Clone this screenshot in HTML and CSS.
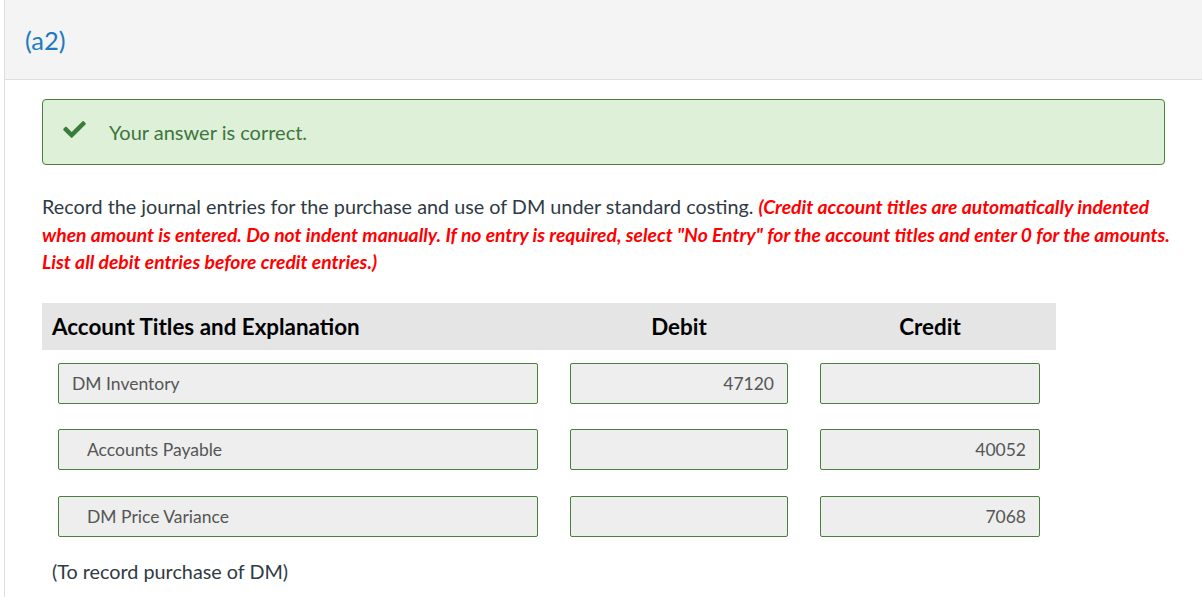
FILE: index.html
```html
<!DOCTYPE html>
<html lang="en">
<head>
    <meta charset="UTF-8">
    <title>(a2) Journal Entries</title>
    <link rel="stylesheet" href="styles.css">
</head>
<body>
    <div class="part">
        <div class="part-header">
            <span class="part-label">(a2)</span>
        </div>
        <div class="part-body">
            <div class="feedback-correct">
                <svg class="check-icon" viewBox="0 64 512 384" width="23" height="17" aria-hidden="true">
                    <path d="M173.9 439.4l-166.4-166.4c-10-10-10-26.2 0-36.2l36.2-36.2c10-10 26.2-10 36.2 0L192 312.7 432.1 72.6c10-10 26.2-10 36.2 0l36.2 36.2c10 10 10 26.2 0 36.2l-294.4 294.4c-10 10-26.2 10-36.2 0z"/>
                </svg>
                <span>Your answer is correct.</span>
            </div>

            <p class="question-text">
                Record the journal entries for the purchase and use of DM under standard costing.
                <em class="instructions">(Credit account titles are automatically indented when amount is entered. Do not indent manually. If no entry is required, select "No Entry" for the account titles and enter 0 for the amounts. List all debit entries before credit entries.)</em>
            </p>

            <div class="journal">
                <div class="journal-head">Account Titles and Explanation</div>
                <div class="journal-head center">Debit</div>
                <div class="journal-head center">Credit</div>

                <div class="journal-cell"><div class="field">DM Inventory</div></div>
                <div class="journal-cell"><div class="field amount">47120</div></div>
                <div class="journal-cell"><div class="field amount"></div></div>

                <div class="journal-cell"><div class="field indented">Accounts Payable</div></div>
                <div class="journal-cell"><div class="field amount"></div></div>
                <div class="journal-cell"><div class="field amount">40052</div></div>

                <div class="journal-cell"><div class="field indented">DM Price Variance</div></div>
                <div class="journal-cell"><div class="field amount"></div></div>
                <div class="journal-cell"><div class="field amount">7068</div></div>
            </div>

            <div class="explanation">(To record purchase of DM)</div>
        </div>
    </div>
</body>
</html>
```

FILE: styles.css
```css
:root {
    --wp-blue: #1e7bbf;
    --wp-green: #3c763d;
    --wp-green-border: #4a7f3e;
    --wp-green-bg: #dff0d8;
    --wp-red: #ff0000;
    --wp-text: #2f3a44;
}

* {
    margin: 0;
    padding: 0;
    box-sizing: border-box;
}

body {
    font-family: Lato, 'Open Sans', sans-serif;
    color: var(--wp-text);
    background-color: white;
    overflow: hidden;
}

.part {
    margin-left: 4px;
    border-left: 1px solid #dddddd;
    min-height: 100vh;
}

.part-header {
    height: 80px;
    display: flex;
    align-items: center;
    padding-left: 20px;
    background-color: #f4f4f4;
    border-bottom: 1px solid #dddddd;
}

.part-label {
    color: var(--wp-blue);
    font-size: 25.5px;
}

.part-body {
    padding: 19px 37px 0 37px;
}

.feedback-correct {
    width: 1123px;
    height: 66px;
    display: flex;
    align-items: center;
    gap: 23px;
    padding-left: 20px;
    background-color: var(--wp-green-bg);
    border: 1px solid var(--wp-green-border);
    border-radius: 4px;
    color: var(--wp-green);
    font-size: 20px;
}

.check-icon {
    fill: #3a7d3a;
    margin-top: -6px;
}

.question-text {
    margin-top: 28px;
    width: 1136px;
    font-size: 19.8px;
    line-height: 27.5px;
}

.instructions {
    color: var(--wp-red);
    font-weight: 700;
    font-size: 0.975em;
    line-height: 20px;
}

.journal {
    margin-top: 27px;
    display: grid;
    grid-template-columns: 512px 250px 252px;
}

.journal-head {
    height: 47px;
    display: flex;
    align-items: center;
    padding-left: 10px;
    background-color: #e5e5e5;
    color: black;
    font-size: 22.4px;
    font-weight: 700;
}

.journal-head.center {
    justify-content: center;
    padding-left: 0;
}

.journal-cell {
    padding: 13px 16px 12.5px 16px;
}

.field {
    height: 41px;
    display: flex;
    align-items: center;
    padding: 0 13px;
    background-color: #eeeeee;
    border: 1px solid var(--wp-green-border);
    border-radius: 2px;
    color: #555555;
    font-size: 17.5px;
}

.field.indented {
    padding-left: 28px;
}

.field.amount {
    justify-content: flex-end;
}

.explanation {
    margin-top: 8px;
    padding-left: 10px;
    font-size: 19.8px;
    line-height: 28px;
}
```
